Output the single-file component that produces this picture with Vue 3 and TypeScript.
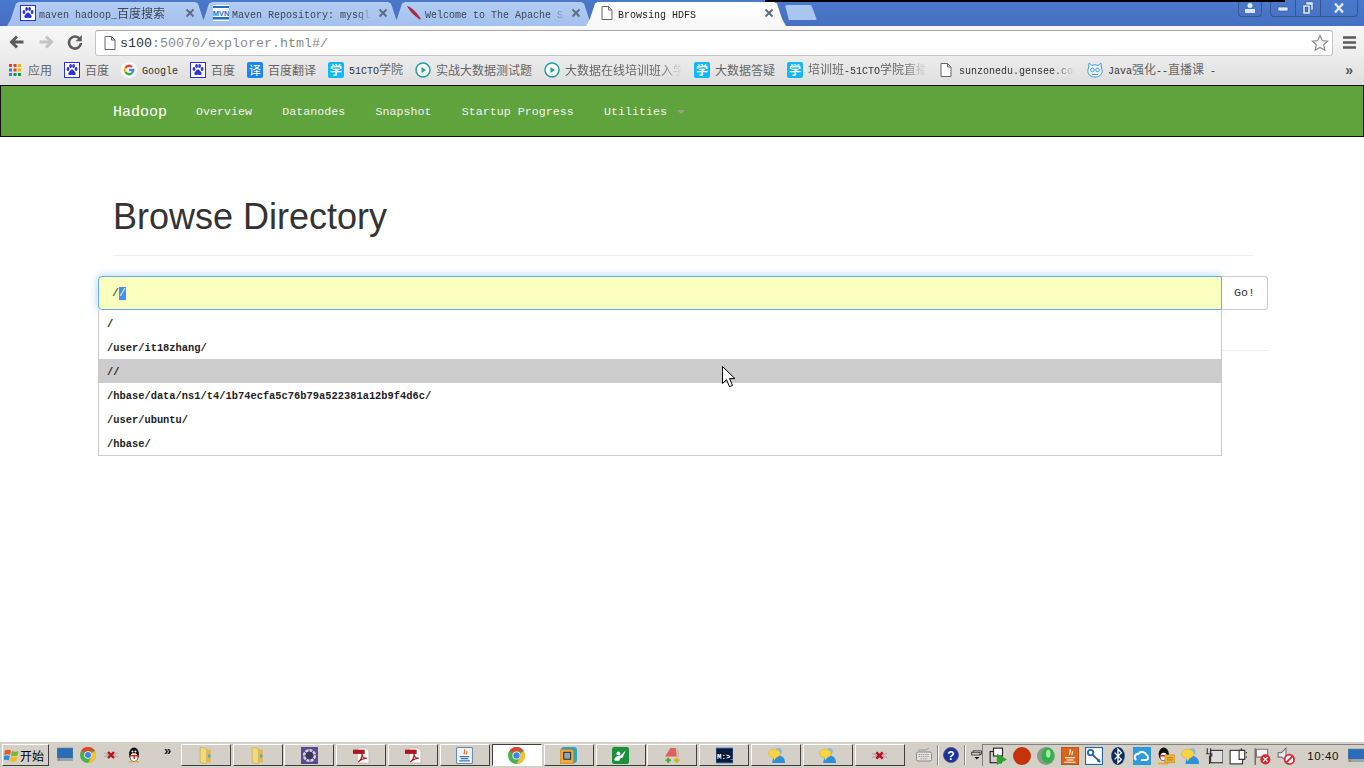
<template>
  <div class="screen">
    <svg class="defs" width="0" height="0" aria-hidden="true">
      <symbol id="paw" viewBox="0 0 16 16">
        <rect x=".5" y=".5" width="15" height="15" fill="#fff" stroke="#2a32e0" />
        <g fill="#2a32e0">
          <ellipse cx="4" cy="7" rx="1.4" ry="1.9" /><ellipse cx="6.6" cy="4" rx="1.4" ry="1.9" />
          <ellipse cx="9.6" cy="4" rx="1.4" ry="1.9" /><ellipse cx="12.1" cy="7" rx="1.4" ry="1.9" />
          <path d="M8 7.5c-1.6 0-2 1.6-3 2.6-1 1-1 3 .8 3 1 0 1.4-.4 2.2-.4s1.300.4 2.200.4c1.800 0 1.800-2 .8-3-1-1-1.400-2.600-3-2.600z" />
        </g>
      </symbol>
      <symbol id="mvn" viewBox="0 0 16 16">
        <rect width="16" height="16" fill="#fff" />
        <rect y="1" width="16" height="2" fill="#1f6fc4" /><rect y="12" width="16" height="2.500" fill="#1f6fc4" />
        <text x="8" y="10.500" text-anchor="middle" font-size="7.500" font-weight="700" font-family="Liberation Sans" fill="#1f6fc4">MVN</text>
      </symbol>
      <symbol id="feather" viewBox="0 0 16 16">
        <path d="M1 1c4 1 9 5 14 13-1 .5-1.500.5-2 0C9 11 4 7 1 1z" fill="#b0263f" />
        <path d="M1 1c2 1 4 3 6 5-2-1-4-2.500-6-5z" fill="#6b3a8c" />
      </symbol>
      <symbol id="doc" viewBox="0 0 16 16">
        <path d="M3 1.500h6.500L13 5v9.500H3z" fill="#fff" stroke="#666" />
        <path d="M9.500 1.500V5H13" fill="none" stroke="#666" />
      </symbol>
      <symbol id="close" viewBox="0 0 10 10">
        <path d="M1.500 1.500l7 7M8.500 1.500l-7 7" stroke="#5a6a80" stroke-width="1.800" />
      </symbol>
      <symbol id="apps" viewBox="0 0 16 16">
        <rect x="2" y="2" width="3" height="3" fill="#e0452c" /><rect x="6.500" y="2" width="3" height="3" fill="#e0452c" /><rect x="11" y="2" width="3" height="3" fill="#f4b400" />
        <rect x="2" y="6.500" width="3" height="3" fill="#3b78e7" /><rect x="6.500" y="6.500" width="3" height="3" fill="#e0452c" /><rect x="11" y="6.500" width="3" height="3" fill="#f4b400" />
        <rect x="2" y="11" width="3" height="3" fill="#3b78e7" /><rect x="6.500" y="11" width="3" height="3" fill="#0f9d58" /><rect x="11" y="11" width="3" height="3" fill="#0f9d58" />
      </symbol>
      <symbol id="google" viewBox="0 0 16 16">
        <circle cx="8" cy="8" r="8" fill="#fff" />
        <g fill="none" stroke-width="2.400">
          <path d="M4.500 5.800A4.200 4.200 0 0 1 11 5" stroke="#ea4335" />
          <path d="M4.500 10.200a4.200 4.200 0 0 1 0-4.400" stroke="#fbbc05" />
          <path d="M11 11a4.200 4.200 0 0 1-6.500-.8" stroke="#34a853" />
          <path d="M8 8h4.200A4.200 4.200 0 0 1 11 11" stroke="#4285f4" />
        </g>
      </symbol>
      <symbol id="yi" viewBox="0 0 16 16">
        <rect width="16" height="16" rx="2" fill="#1c86ee" />
        <text x="8" y="12.500" text-anchor="middle" font-size="12" font-family="Noto Sans CJK SC" fill="#fff">译</text>
      </symbol>
      <symbol id="xue" viewBox="0 0 16 16">
        <rect width="16" height="16" rx="2" fill="#12b7f5" />
        <text x="8" y="12.500" text-anchor="middle" font-size="12" font-weight="700" font-family="Noto Sans CJK SC" fill="#fff">学</text>
      </symbol>
      <symbol id="play" viewBox="0 0 16 16">
        <circle cx="8" cy="8" r="7" fill="#fff" stroke="#1f9fa8" stroke-width="1.500" />
        <path d="M6.500 5l4.500 3-4.500 3z" fill="#1f9fa8" />
      </symbol>
      <symbol id="robot" viewBox="0 0 16 16">
        <path d="M2 1l3 2.500a6 6 0 0 1 6 0L14 1l.5 5c1.500 3 .5 6-1.500 7.500-2.500 2-7.500 2-10 0C1 12 0 9 1.500 6z" fill="#eaf4fb" stroke="#4a9ed0" />
        <circle cx="5.500" cy="8" r="1.800" fill="#fff" stroke="#4a9ed0" /><circle cx="10.500" cy="8" r="1.800" fill="#fff" stroke="#4a9ed0" />
        <path d="M5 12.500h6" stroke="#4a9ed0" />
      </symbol>
      <symbol id="flag" viewBox="0 0 16 16">
        <path d="M1 3.500c2-1 4-1 6 0l-1 4.500c-2-1-4-1-6 0z" fill="#e8562a" />
        <path d="M8 4c2 1 4 1 6.500 0l-1 4.500c-2.500 1-4.500 1-6.500 0z" fill="#7cb82f" />
        <path d="M0 9c2-1 4-1 5.800 0l-1 4.500c-2-1-4-1-6 0z" fill="#2d8be0" />
        <path d="M6.800 9.500c2 1 4 1 6.500 0l-1 4.500c-2.500 1-4.500 1-6.500 0z" fill="#f6b91e" />
      </symbol>
      <symbol id="monitor" viewBox="0 0 16 16">
        <rect x="0" y="1" width="16" height="11" fill="#2b6cb8" stroke="#6e7f95" stroke-width=".600" />
        <rect x="0" y="11" width="16" height="3" fill="#9aa4ad" /><rect x="1" y="11.500" width="2" height="2" fill="#d96a2a" />
      </symbol>
      <symbol id="chrome" viewBox="0 0 16 16">
        <circle cx="8" cy="8" r="8" fill="#4caf50" />
        <path d="M8 0a8 8 0 0 1 6.930 4H8a4 4 0 0 0-3.460 2L1.500 3.300A8 8 0 0 1 8 0z" fill="#e0452c" />
        <path d="M14.930 4A8 8 0 0 1 8 16l3.460-6A4 4 0 0 0 11.500 6z" fill="#fbc02d" />
        <circle cx="8" cy="8" r="3.800" fill="#fff" /><circle cx="8" cy="8" r="3" fill="#3f83e6" />
      </symbol>
      <symbol id="redx" viewBox="0 0 16 16">
        <path d="M1 6l5 2-5 2M15 6l-5 2 5 2" fill="none" stroke="#b9a9a9" stroke-width="1.200" />
        <path d="M5 5l6 6M11 5l-6 6" stroke="#b5121b" stroke-width="2.400" />
      </symbol>
      <symbol id="qq" viewBox="0 0 16 16">
        <ellipse cx="8" cy="7.500" rx="5" ry="7" fill="#111" /><ellipse cx="8" cy="10" rx="3.600" ry="4" fill="#fff" />
        <circle cx="6.500" cy="4.500" r="1" fill="#fff" /><circle cx="9.500" cy="4.500" r="1" fill="#fff" />
        <path d="M6 6h4l-2 1.500z" fill="#f5a623" /><path d="M3.500 8h9v1.500H9v2.500H7.500V9.500h-4z" fill="#d92b1f" />
        <path d="M3 14h4v1.500H3zM9 14h4v1.500H9z" fill="#f5a623" />
      </symbol>
      <symbol id="folder" viewBox="0 0 16 16">
        <path d="M3 0l6 1.500V16l-6-1.500z" fill="#f3d97a" stroke="#bfa244" stroke-width=".500" />
        <path d="M9 2.500h4v12H9z" fill="#dfb94e" /><rect x="10.500" y="7" width="2" height="3" fill="#4aa6e0" />
      </symbol>
      <symbol id="gear" viewBox="0 0 16 16">
        <rect width="16" height="16" fill="#5a4a90" />
        <circle cx="8" cy="8" r="5" fill="#3a3560" stroke="#d6d3da" stroke-width="2.400" stroke-dasharray="3 .8" />
      </symbol>
      <symbol id="pdf" viewBox="0 0 16 16">
        <path d="M4 1h8l3 3v11H4z" fill="#fff" stroke="#b8a8a8" stroke-width=".600" />
        <rect x="0" y="2.500" width="11" height="4" fill="#b3141d" />
        <path d="M5 14c2-1 4-5 3.500-7.500C8 8 10 11 13 10.500c-3 .5-6 1-8 3.500z" fill="none" stroke="#b3141d" stroke-width="1.200" />
      </symbol>
      <symbol id="cup" viewBox="0 0 16 16">
        <rect x=".5" y=".5" width="15" height="15" rx="1" fill="#eef3f8" stroke="#6b8cae" />
        <path d="M8 2c1.500 2-1.500 3 0 5M10 4c1 1-1 2 0 3" fill="none" stroke="#e0762a" stroke-width="1.200" />
        <path d="M3.500 9h9M4.500 11h7M3 13h10" stroke="#3f78b5" stroke-width="1.100" />
      </symbol>
      <symbol id="square" viewBox="0 0 16 16">
        <rect x="1" y="0" width="15" height="15" rx="3" fill="#2aa6c7" />
        <rect x="0" y="2" width="13" height="14" rx="2" fill="#f2a93b" stroke="#8a6b2a" stroke-width=".500" />
        <rect x="3.500" y="5" width="6.500" height="6.500" fill="#8ea4b5" stroke="#26313d" />
      </symbol>
      <symbol id="green" viewBox="0 0 16 16">
        <rect width="16" height="16" rx="2" fill="#1c8f3a" />
        <path d="M2 12c1-3 3-4 6-4l5-5-3 7c-2 0-3 1-3 3H3z" fill="#fff" /><circle cx="6" cy="6" r="1.800" fill="#fff" />
      </symbol>
      <symbol id="eraser" viewBox="0 0 16 16">
        <path d="M6 1h7l1 8H1z" fill="#e0605c" /><path d="M11 1h2l1 8h-2z" fill="#c8c4bb" />
        <path d="M4 10v5M1.500 12.500h5" stroke="#5aa02c" stroke-width="1.800" /><path d="M12 10v5M9.500 12.500h5" stroke="#c8b520" stroke-width="1.800" />
      </symbol>
      <symbol id="term" viewBox="0 0 16 16">
        <rect y="1" width="16" height="14" fill="#0a1a3a" stroke="#2c6fb0" stroke-width=".800" />
        <text x="1" y="11" font-size="7" font-weight="700" font-family="Liberation Mono" fill="#fff">M:&gt;_</text>
      </symbol>
      <symbol id="chat" viewBox="0 0 16 16">
        <circle cx="10" cy="4" r="3" fill="#7cc0ec" /><path d="M4 15c0-5 3-7 6-7s6 2 6 7z" fill="#2f8fd8" />
        <ellipse cx="6" cy="6" rx="5.500" ry="4" fill="#fbd443" stroke="#d9a620" stroke-width=".500" /><path d="M5 9l1 4 2-4z" fill="#fbd443" />
      </symbol>
      <symbol id="keyboard" viewBox="0 0 16 16">
        <path d="M2 3h8l3-2" fill="none" stroke="#999" />
        <rect x=".5" y="5" width="15" height="9" rx="1.500" fill="#e4e2dc" stroke="#8a8a8a" />
        <path d="M2.500 7.500h11M2.500 9.500h11M4.500 11.800h7" stroke="#9a9a9a" stroke-dasharray="1.500 .7" />
      </symbol>
      <symbol id="help" viewBox="0 0 16 16">
        <circle cx="8" cy="8" r="7.500" fill="#1a2fa8" stroke="#555" stroke-width=".800" />
        <text x="8" y="12.500" text-anchor="middle" font-size="12" font-weight="700" font-family="Liberation Sans" fill="#fff">?</text>
      </symbol>
      <symbol id="winplay" viewBox="0 0 16 16">
        <rect x="1" y="4" width="10" height="10" fill="none" stroke="#222" /><rect x="4" y="1" width="8" height="7" fill="#fff" stroke="#222" />
        <path d="M7 6l9 5-9 5z" fill="#2fa52f" />
      </symbol>
      <symbol id="redball" viewBox="0 0 16 16"><circle cx="8" cy="8" r="8" fill="#c5330a" /></symbol>
      <symbol id="greenball" viewBox="0 0 16 16">
        <circle cx="8" cy="8" r="8" fill="#8a9a8a" /><ellipse cx="9.500" cy="7.500" rx="5.500" ry="7" fill="#2eb34a" /><ellipse cx="10" cy="6" rx="2" ry="3.500" fill="#a8e8a8" />
      </symbol>
      <symbol id="orange" viewBox="0 0 16 16">
        <rect width="16" height="16" fill="#d9651c" stroke="#a34c12" />
        <path d="M8 2c1.500 2-1.500 3 0 5M10 4c1 1-1 2 0 3" fill="none" stroke="#fff" stroke-width="1.100" />
        <path d="M3.500 9.500h9M5 11.500h6M3 13.500h10" stroke="#fff" />
      </symbol>
      <symbol id="wrench" viewBox="0 0 16 16">
        <rect x=".5" y=".5" width="15" height="15" fill="#fff" stroke="#2468b0" />
        <circle cx="5" cy="5" r="2.400" fill="none" stroke="#2468b0" stroke-width="1.600" /><path d="M7 7l6.500 6.500M11 13l2-2" stroke="#2468b0" stroke-width="1.600" />
      </symbol>
      <symbol id="bt" viewBox="0 0 16 16">
        <ellipse cx="8" cy="8" rx="6" ry="8" fill="#0b2c66" />
        <path d="M5 5l6 6-3 3V2l3 3-6 6" fill="none" stroke="#fff" stroke-width="1.200" />
      </symbol>
      <symbol id="cloud" viewBox="0 0 16 16">
        <rect width="16" height="16" fill="#2d9ae0" />
        <path d="M3 11.500a3 3 0 0 1 2-5.500 4 4 0 0 1 7 1 2.500 2.500 0 0 1 0 4.500H7" fill="none" stroke="#fff" stroke-width="1.800" />
      </symbol>
      <symbol id="qqmail" viewBox="0 0 16 16">
        <ellipse cx="6" cy="6.500" rx="4.500" ry="6" fill="#111" /><ellipse cx="6" cy="8.500" rx="3" ry="3.500" fill="#fff" />
        <path d="M2.500 7h7v1.500h-7z" fill="#d92b1f" /><path d="M1 14h9v1.500H1z" fill="#f5a623" />
        <rect x="7" y="7" width="9" height="7" fill="#f4b73a" stroke="#b07d16" stroke-width=".500" /><path d="M8.500 9.500h6M8.500 11.500h6" stroke="#9a6a12" stroke-width=".700" />
      </symbol>
      <symbol id="plugmon" viewBox="0 0 16 16">
        <rect x="5" y="3" width="11" height="11" fill="#ddd" stroke="#333" />
        <path d="M2 1v5M5 1v5M1 6h5v2H4v7" fill="none" stroke="#333" />
      </symbol>
      <symbol id="plug" viewBox="0 0 16 16">
        <rect x="1" y="3" width="11" height="12" fill="#fff" stroke="#333" />
        <path d="M9 3h5v8H9zM11 1v2M15 5h1M15 9h1" fill="#fff" stroke="#333" />
      </symbol>
      <symbol id="flagno" viewBox="0 0 16 16">
        <path d="M2 1v15" stroke="#666" stroke-width="1.200" /><path d="M3 2h10v7H3z" fill="#f4f4f4" stroke="#777" />
        <circle cx="11" cy="11" r="4.500" fill="#d42a33" /><path d="M9 9l4 4M13 9l-4 4" stroke="#fff" stroke-width="1.200" />
      </symbol>
      <symbol id="mute" viewBox="0 0 16 16">
        <path d="M1 5h3l4-4v11L4 9H1z" fill="#e8e8e8" stroke="#777" />
        <circle cx="11" cy="11" r="4.200" fill="#fff" stroke="#d42a33" stroke-width="1.600" /><path d="M8 14l6-6" stroke="#d42a33" stroke-width="1.600" />
      </symbol>
      <symbol id="minimon" viewBox="0 0 16 16">
        <rect x="3" y="2" width="12" height="5" fill="#d4d0c8" stroke="#111" /><rect x="1" y="4" width="12" height="4" fill="#d4d0c8" stroke="#111" />
        <path d="M5 11h7l-3.500 3.500z" fill="#111" />
      </symbol>
    </svg>

    <!-- browser chrome -->
    <div class="glitch"></div>
    <div class="tabstrip">
      <div v-for="tab in tabs" :key="tab.title" class="tab" :class="{ active: tab.active }">
        <svg class="ico"><use :href="'#' + tab.icon" /></svg>
        <span class="tab-title mixed"><span v-for="s in segs(tab.title)" :class="{ lat: s.lat }">{{ s.text }}</span></span>
        <svg class="tab-close"><use href="#close" /></svg>
      </div>
      <div class="newtab"></div>
      <div class="winbtns">
        <div class="winbtn user">
          <svg width="12" height="12" viewBox="0 0 12 12"><circle cx="6" cy="3.500" r="2.500" fill="#dfe8f5" /><rect x="1" y="7" width="10" height="4" fill="#dfe8f5" /></svg>
        </div>
        <div class="wingroup">
          <div class="winbtn">
            <svg width="12" height="12" viewBox="0 0 12 12"><rect x="1" y="5" width="10" height="4" rx="1" fill="#dfe8f5" stroke="#33507f" stroke-width=".600" /></svg>
          </div>
          <div class="winbtn">
            <svg width="12" height="14" viewBox="0 0 12 14"><path d="M4 1h7v8H9V4H4zM1 4h7v9H1zM3 6v5h3V6z" fill="#dfe8f5" stroke="#33507f" stroke-width=".400" fill-rule="evenodd" /></svg>
          </div>
          <div class="winbtn wide">
            <svg width="12" height="12" viewBox="0 0 12 12"><path d="M2 1.500l8 9M10 1.500l-8 9" stroke="#dfe8f5" stroke-width="2.400" /></svg>
          </div>
        </div>
      </div>
    </div>

    <div class="toolbar">
      <svg class="tool" viewBox="0 0 16 16"><path d="M14.500 8H4M8 2.500L2.500 8 8 13.500" fill="none" stroke="#5b5b5b" stroke-width="3" /></svg>
      <svg class="tool" viewBox="0 0 16 16"><path d="M1.500 8H12M8 2.500L13.500 8 8 13.500" fill="none" stroke="#c4c4c4" stroke-width="3" /></svg>
      <svg class="tool" viewBox="0 0 16 16"><path d="M13 5.200A6 6 0 1 0 14 9" fill="none" stroke="#5b5b5b" stroke-width="2.600" /><path d="M14.800 1v6.200H8.600z" fill="#5b5b5b" /></svg>
      <div class="omnibox">
        <svg class="ico omni-doc"><use href="#doc" /></svg>
        <span class="url"><b>s100</b>:50070/explorer.html#/</span>
        <svg class="star" viewBox="0 0 18 18"><path d="M9 1.500l2.300 5 5.400.6-4 3.700 1.100 5.400L9 13.500l-4.800 2.700 1.100-5.400-4-3.700 5.400-.6z" fill="#fafafa" stroke="#8a8a8a" stroke-width="1.200" /></svg>
      </div>
      <svg class="menu" viewBox="0 0 13 13"><path d="M0 1.500h13M0 6.500h13M0 11.500h13" stroke="#5b5b5b" stroke-width="2.600" /></svg>
    </div>

    <div class="bookmarks">
      <div v-for="b in bookmarks" :key="b.text + b.w" class="bookmark">
        <svg class="ico"><use :href="'#' + b.icon" /></svg>
        <span class="mixed bm-text" :class="{ fade: b.fade }" :style="{ width: b.w + 'px' }"><span v-for="s in segs(b.text)" :class="{ lat: s.lat }">{{ s.text }}</span></span>
      </div>
      <span class="more">»</span>
    </div>

    <!-- hadoop page -->
    <nav class="navbar">
      <a class="brand">Hadoop</a>
      <a v-for="item in navItems" :key="item" class="nav-link">{{ item }}</a>
      <a class="nav-link utilities">Utilities<i class="caret"></i></a>
    </nav>

    <main class="page">
      <div class="page-header">
        <h1>Browse Directory</h1>
      </div>
      <div class="input-group">
        <div class="path-input">/<span class="selected">/</span></div>
        <button class="go">Go!</button>
        <ul class="suggest">
          <li v-for="(path, i) in paths" :key="path" :class="{ hover: i === 2 }">{{ path }}</li>
        </ul>
      </div>
      <hr class="rule" />
      <svg class="cursor" width="14" height="22" viewBox="0 0 14 22"><path d="M.5.500v17l4-3.800 3 7 3-1.300-3-6.800h5.500z" fill="#fff" stroke="#000" /></svg>
    </main>

    <!-- windows taskbar -->
    <footer class="taskbar">
      <button class="start"><svg class="ico"><use href="#flag" /></svg>开始</button>
      <div class="quick">
        <svg v-for="q in quickLaunch" class="ico"><use :href="'#' + q" /></svg>
      </div>
      <span class="chev">»</span>
      <div class="tasks">
        <div v-for="(t, i) in tasks" class="task" :class="{ pressed: i === 6 }">
          <svg class="task-ico"><use :href="'#' + t" /></svg>
        </div>
      </div>
      <svg class="ico kb"><use href="#keyboard" /></svg>
      <i class="sep"></i>
      <svg class="ico"><use href="#help" /></svg>
      <i class="sep"></i>
      <svg class="mini"><use href="#minimon" /></svg>
      <div class="tray">
        <svg v-for="t in tray" class="tray-ico"><use :href="'#' + t" /></svg>
        <span class="clock">10:40</span>
        <svg class="ico tray-mon"><use href="#monitor" /></svg>
      </div>
    </footer>
  </div>
</template>

<script setup lang="ts">
interface Seg { text: string; lat: boolean }

const tabs = [
  { icon: 'paw', title: 'maven hadoop_百度搜索', active: false },
  { icon: 'mvn', title: 'Maven Repository: mysql', active: false },
  { icon: 'feather', title: 'Welcome to The Apache S', active: false },
  { icon: 'doc', title: 'Browsing HDFS', active: true }
]

const bookmarks = [
  { icon: 'apps', text: '应用', w: 24, fade: false },
  { icon: 'paw', text: '百度', w: 24, fade: false },
  { icon: 'google', text: 'Google', w: 36, fade: false },
  { icon: 'paw', text: '百度', w: 24, fade: false },
  { icon: 'yi', text: '百度翻译', w: 48, fade: false },
  { icon: 'xue', text: '51CTO学院', w: 54, fade: false },
  { icon: 'play', text: '实战大数据测试题', w: 96, fade: false },
  { icon: 'play', text: '大数据在线培训班入学', w: 117, fade: true },
  { icon: 'xue', text: '大数据答疑', w: 60, fade: false },
  { icon: 'xue', text: '培训班-51CTO学院直播', w: 118, fade: true },
  { icon: 'doc', text: 'sunzonedu.gensee.com', w: 116, fade: true },
  { icon: 'robot', text: 'Java强化--直播课 -', w: 107, fade: false }
]

const navItems = ['Overview', 'Datanodes', 'Snapshot', 'Startup Progress']

const paths = [
  '/',
  '/user/it18zhang/',
  '//',
  '/hbase/data/ns1/t4/1b74ecfa5c76b79a522381a12b9f4d6c/',
  '/user/ubuntu/',
  '/hbase/'
]

const quickLaunch = ['monitor', 'chrome', 'redx', 'qq']
const tasks = ['folder', 'folder', 'gear', 'pdf', 'pdf', 'cup', 'chrome', 'square', 'green', 'eraser', 'term', 'chat', 'chat', 'redx']
const tray = ['winplay', 'redball', 'greenball', 'orange', 'wrench', 'bt', 'cloud', 'qqmail', 'chat', 'plugmon', 'plug', 'flagno', 'mute']

// latin and cjk runs get different font sizes, like the half-width bitmap font in the shot
function segs(text: string): Seg[] {
  const runs = text.match(/[\x00-\x7f]+|[^\x00-\x7f]+/g) || []
  return runs.map((r) => ({ text: r, lat: r.charCodeAt(0) < 128 }))
}
</script>

<style scoped>
.screen {
  position: relative;
  display: flex;
  flex-direction: column;
  width: 1364px;
  height: 768px;
  overflow: hidden;
  background: #fff;
  font-family: "Liberation Mono", "Noto Sans CJK SC", monospace;
}
.defs {
  position: absolute;
}
.ico {
  flex: none;
  width: 16px;
  height: 16px;
}
.mixed {
  font-family: "Noto Sans CJK SC", sans-serif;
  font-size: 12px;
  white-space: nowrap;
  color: #666;
}
.lat {
  font-family: "Liberation Mono", monospace;
  font-size: 10px;
  color: #333;
}

.glitch {
  position: absolute;
  top: 0;
  left: 765px;
  width: 520px;
  height: 2px;
  background: #000;
}
.tabstrip {
  display: flex;
  flex: none;
  height: 26px;
  padding-left: 7px;
  background: linear-gradient(#4a78cb, #4670c2);
}
.tab {
  display: flex;
  flex: none;
  align-items: center;
  width: 200px;
  height: 24px;
  margin-top: 2px;
  margin-right: -7px;
  padding: 0 12px 3px 13px;
  box-sizing: border-box;
  background: linear-gradient(#b2cdf3, #a3c1ee);
  clip-path: polygon(0 100%, 4px 70%, 9px 6%, 12px 0, calc(100% - 12px) 0, calc(100% - 9px) 6%, calc(100% - 4px) 70%, 100% 100%);
}
.tab.active {
  background: linear-gradient(#fff, #f8f8f8);
}
.tab-title {
  flex: 1;
  margin-left: 3px;
  margin-right: 6px;
  overflow: hidden;
  -webkit-mask-image: linear-gradient(to left, transparent, #000 14px);
  mask-image: linear-gradient(to left, transparent, #000 14px);
}
.tab-title,
.tab-title .lat {
  color: #3d4654;
}
.tab.active .tab-title,
.tab.active .tab-title .lat {
  color: #222;
}
.tab-close {
  flex: none;
  width: 10px;
  height: 10px;
}
.newtab {
  flex: none;
  width: 32px;
  height: 15px;
  margin: 5px 0 0 6px;
  background: #a9c6ef;
  border-radius: 2px;
  clip-path: polygon(0 0, 82% 0, 100% 100%, 12% 100%);
}
.winbtns {
  display: flex;
  gap: 8px;
  margin-left: auto;
  margin-right: 6px;
  height: 17px;
}
.winbtn {
  display: flex;
  align-items: center;
  justify-content: center;
  width: 25px;
  box-sizing: border-box;
  border-right: 1px solid #35578f;
}
.winbtn.user {
  width: 24px;
  border: 1px solid #35578f;
  border-top: 0;
  border-radius: 0 0 4px 4px;
}
.winbtn.wide {
  width: 36px;
  border-right: 0;
}
.wingroup {
  display: flex;
  border: 1px solid #35578f;
  border-top: 0;
  border-radius: 0 0 4px 4px;
}

.toolbar {
  display: flex;
  flex: none;
  align-items: flex-start;
  gap: 13px;
  height: 32px;
  padding: 4px 8px 0 9px;
  box-sizing: border-box;
  background: linear-gradient(#f8f8f8, #ececec);
}
.tool {
  flex: none;
  width: 16px;
  height: 16px;
  margin-top: 4px;
}
.omnibox {
  display: flex;
  flex: 1;
  align-items: center;
  height: 26px;
  margin-left: -1px;
  padding: 0 3px 0 6px;
  box-sizing: border-box;
  background: #fff;
  border: 1px solid #c4c4c4;
  border-top-color: #a6a6a6;
  border-radius: 3px;
}
.url {
  margin-left: 2px;
  margin-top: 1px;
  font-size: 13.33px;
  color: #8a8a8a;
}
.url b {
  font-weight: 400;
  color: #333;
}
.star {
  flex: none;
  width: 18px;
  height: 18px;
  margin-left: auto;
}
.menu {
  flex: none;
  width: 13px;
  height: 13px;
  margin-top: 6px;
  margin-left: -3px;
}

.bookmarks {
  display: flex;
  flex: none;
  align-items: center;
  gap: 12px;
  height: 27px;
  padding: 0 0 3px 7px;
  box-sizing: border-box;
  background: linear-gradient(#ececec, #dedede);
}
.bookmark {
  display: flex;
  flex: none;
  align-items: center;
  gap: 5px;
}
.bm-text {
  display: block;
  overflow: hidden;
  line-height: 18px;
}
.bm-text.fade {
  -webkit-mask-image: linear-gradient(to left, transparent, #000 22px);
  mask-image: linear-gradient(to left, transparent, #000 22px);
}
.more {
  margin-left: auto;
  margin-right: 11px;
  font-family: "Liberation Sans", sans-serif;
  font-size: 14px;
  font-weight: 700;
  color: #555;
}

.navbar {
  display: flex;
  flex: none;
  align-items: center;
  height: 52px;
  padding: 2px 0 0 112px;
  box-sizing: border-box;
  background: #5fa33d;
  border: 1px solid #111;
  color: #f2f2f2;
}
.brand {
  margin-right: 29px;
  font-size: 15px;
  color: #fff;
}
.nav-link {
  margin-right: 30.3px;
  font-size: 11.67px;
}
.caret {
  display: inline-block;
  margin-left: 10px;
  vertical-align: middle;
  border-top: 4px solid #9aa090;
  border-left: 4px solid transparent;
  border-right: 4px solid transparent;
}

.page {
  position: relative;
  flex: 1;
  padding: 0 96px 0 98px;
}
.page-header {
  margin: 60px 15px 20px;
  padding-bottom: 18px;
  border-bottom: 1px solid #eee;
}
.page-header h1 {
  margin: 0;
  font-family: "Liberation Sans", sans-serif;
  font-size: 36px;
  font-weight: 500;
  line-height: 40px;
  color: #333;
}
.input-group {
  position: relative;
  display: flex;
  height: 34px;
}
.path-input {
  flex: 1;
  padding-left: 13px;
  box-sizing: border-box;
  background: #fbffbd;
  border: 1px solid #66afe9;
  border-radius: 4px 0 0 4px;
  box-shadow: 0 0 8px rgba(102, 175, 233, 0.6);
  font-size: 11.67px;
  line-height: 33px;
  color: #333;
}
.selected {
  display: inline-block;
  height: 13px;
  background: #3f92f4;
  color: #e8f2ff;
  line-height: 13px;
}
.go {
  width: 46px;
  padding: 0;
  background: #fff;
  border: 1px solid #ccc;
  border-left: 0;
  border-radius: 0 4px 4px 0;
  font-family: inherit;
  font-size: 11.67px;
  color: #333;
}
.suggest {
  position: absolute;
  top: 34px;
  left: 0;
  z-index: 2;
  width: 1124px;
  margin: 0;
  padding: 1px 0 0;
  box-sizing: border-box;
  list-style: none;
  background: #fff;
  border: 1px solid #ccc;
  border-top: 0;
}
.suggest li {
  height: 24px;
  padding-left: 8px;
  font-size: 10.4px;
  font-weight: 700;
  line-height: 26px;
  color: #222;
}
.suggest li.hover {
  background: #ccc;
}
.rule {
  margin: 40px 0 0;
  border: 0;
  border-top: 1px solid #eee;
}
.cursor {
  position: absolute;
  top: 229px;
  left: 722px;
  z-index: 3;
}

.taskbar {
  display: flex;
  flex: none;
  align-items: center;
  height: 27px;
  box-sizing: border-box;
  background: #d4d0c8;
  border-top: 1px solid #fff;
}
.start {
  display: flex;
  flex: none;
  align-items: center;
  gap: 0;
  width: 47px;
  height: 22px;
  margin-left: 2px;
  padding: 0 0 0 1px;
  box-sizing: border-box;
  background: #d4d0c8;
  border: 1px solid;
  border-color: #fff #404040 #404040 #fff;
  font-family: "Noto Sans CJK SC", sans-serif;
  font-size: 12px;
  color: #000;
}
.quick {
  display: flex;
  gap: 7px;
  margin-left: 8px;
}
.chev {
  width: 17px;
  margin-left: 22px;
  margin-right: 4px;
  margin-top: 3px;
  align-self: flex-start;
  font-family: "Liberation Sans", sans-serif;
  font-size: 13px;
  font-weight: 700;
  line-height: 12px;
  color: #111;
}
.tasks {
  display: flex;
  gap: 1.85px;
}
.task {
  display: flex;
  flex: none;
  align-items: center;
  justify-content: center;
  width: 50px;
  height: 22px;
  box-sizing: border-box;
  border: 1px solid;
  border-color: #fff #404040 #404040 #fff;
}
.task.pressed {
  background: #fff;
  border-color: #404040 #fff #fff #404040;
}
.task-ico {
  flex: none;
  width: 17px;
  height: 17px;
}
.kb {
  margin-left: 11px;
}
.sep {
  width: 1px;
  height: 20px;
  margin: 0 6px 0 5px;
  background: #8a8a84;
  box-shadow: 1px 0 #fff;
}
.mini {
  flex: none;
  width: 11px;
  height: 14px;
}
.tray {
  display: flex;
  flex: 1;
  align-items: center;
  gap: 6px;
  height: 22px;
  margin-left: 0;
  padding-left: 6px;
  box-sizing: border-box;
  border-top: 1px solid #808080;
  border-left: 1px solid #808080;
}
.tray-ico {
  flex: none;
  width: 18px;
  height: 18px;
}
.clock {
  margin-left: 6px;
  font-family: "Liberation Sans", sans-serif;
  font-size: 11.5px;
  letter-spacing: 0.6px;
  color: #111;
}
.tray-mon {
  margin-left: 3px;
}
</style>

<style>
html,
body {
  margin: 0;
  overflow: hidden;
  background: #fff;
}
</style>
